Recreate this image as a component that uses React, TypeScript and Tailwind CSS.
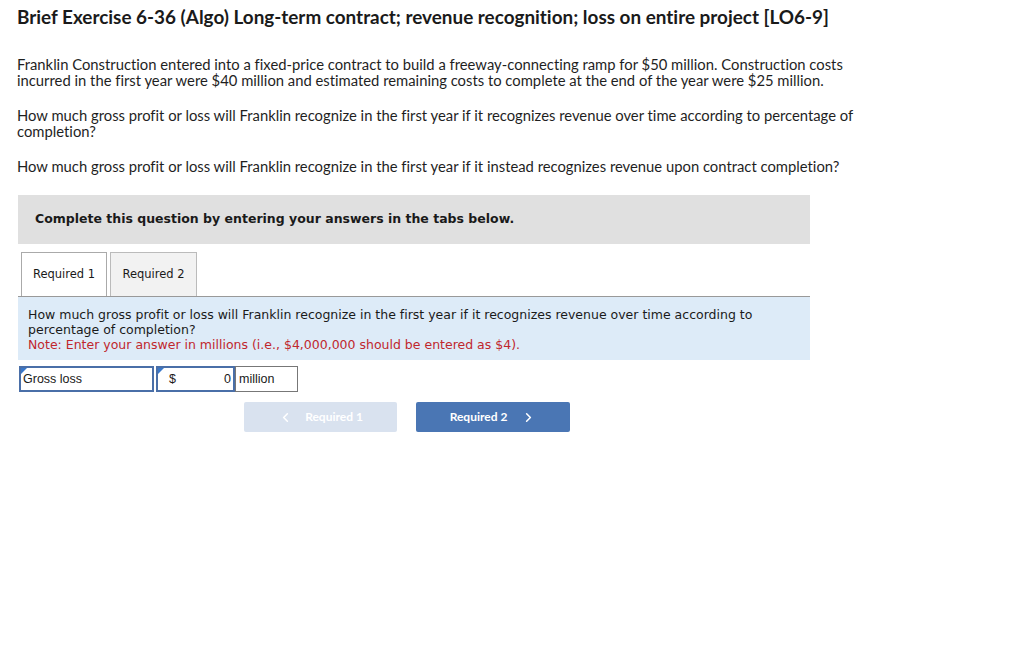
import { ChevronLeft, ChevronRight } from 'lucide-react';

const sans = "font-['Lato','Open_Sans',sans-serif] [font-variant-ligatures:none]";

function Flag() {
  return <span className="absolute left-0 top-0 w-0 h-0 border-t-[6px] border-t-[#3a78c9] border-r-[6px] border-r-transparent" />;
}

export default function App() {
  return (
    <div className={`bg-white min-h-screen text-[#1f1f1f] ${sans}`}>
      <div className="pl-[17px] pt-[5px] pr-4">
        <h1 className="text-[18.9px] font-bold leading-[24px] text-[#1a1a1a]">
          Brief Exercise 6-36 (Algo) Long-term contract; revenue recognition; loss on entire project [LO6-9]
        </h1>

        <div className="mt-[27px] text-[14.8px] leading-[16px] space-y-[19px] w-[860px]">
          <p>
            Franklin Construction entered into a fixed-price contract to build a freeway-connecting ramp for $50 million. Construction costs incurred in the first year were $40 million and estimated remaining costs to complete at the end of the year were $25 million.
          </p>
          <p>
            How much gross profit or loss will Franklin recognize in the first year if it recognizes revenue over time according to percentage of completion?
          </p>
          <p>
            How much gross profit or loss will Franklin recognize in the first year if it instead recognizes revenue upon contract completion?
          </p>
        </div>
      </div>

      <div className="ml-[18px] w-[792px] mt-[21px] font-['DejaVu_Sans','Verdana',sans-serif]">
        <div className="bg-[#e0e0e0] h-[49px] flex items-center pl-[17px] text-[12.5px] font-bold text-[#1a1a1a]">
          Complete this question by entering your answers in the tabs below.
        </div>

        <div className="mt-[8px] flex items-end gap-[3px] pl-[3px] border-b border-[#999]">
          <div className="w-[86px] h-[44px] bg-white border border-b-0 border-[#aaa] flex items-center justify-center text-[11.5px] text-[#1a1a1a]">
            Required 1
          </div>
          <div className="w-[87px] h-[44px] bg-[#f2f2f2] border border-b-0 border-[#bbb] flex items-center justify-center text-[11.5px] text-[#1a1a1a]">
            Required 2
          </div>
        </div>

        <div className="bg-[#ddebf8] h-[63px] pt-[10px] pl-[10px] text-[12.5px] leading-[15px] text-[#1a1a1a]">
          <p>
            How much gross profit or loss will Franklin recognize in the first year if it recognizes revenue over time according to percentage of completion?
          </p>
          <p className="text-[#c0272d]">Note: Enter your answer in millions (i.e., $4,000,000 should be entered as $4).</p>
        </div>

        <div className="mt-[6px] flex items-center font-['Liberation_Sans',Arial,sans-serif] text-[12.5px] text-[#1a1a1a]">
          <div className="relative w-[135px] h-[26px] ml-[1px] border-2 border-[#4a6fa8] flex items-center pl-[2px]">
            <Flag />
            Gross loss
          </div>
          <div className="relative w-[79px] h-[26px] ml-[2px] border-2 border-[#4a6fa8] flex items-center pl-[11px] pr-[2px]">
            <Flag />
            <span>$</span>
            <span className="ml-auto">0</span>
          </div>
          <div className="w-[63px] h-[26px] border border-[#777] flex items-center pl-[3px]">million</div>
        </div>

        <div className={`mt-[10px] flex gap-[19px] pl-[226px] ${sans}`}>
          <div className="w-[153px] h-[30px] rounded-[2px] bg-[#d9e2ef] text-white flex items-center justify-center gap-[12px] text-[12px] font-bold">
            <ChevronLeft size={15} strokeWidth={2.5} />
            <span>Required 1</span>
          </div>
          <div className="w-[154px] h-[30px] rounded-[2px] bg-[#4a76b4] text-white flex items-center justify-center gap-[14px] text-[12px] font-bold">
            <span>Required 2</span>
            <ChevronRight size={15} strokeWidth={2.5} />
          </div>
        </div>
      </div>
    </div>
  );
}
